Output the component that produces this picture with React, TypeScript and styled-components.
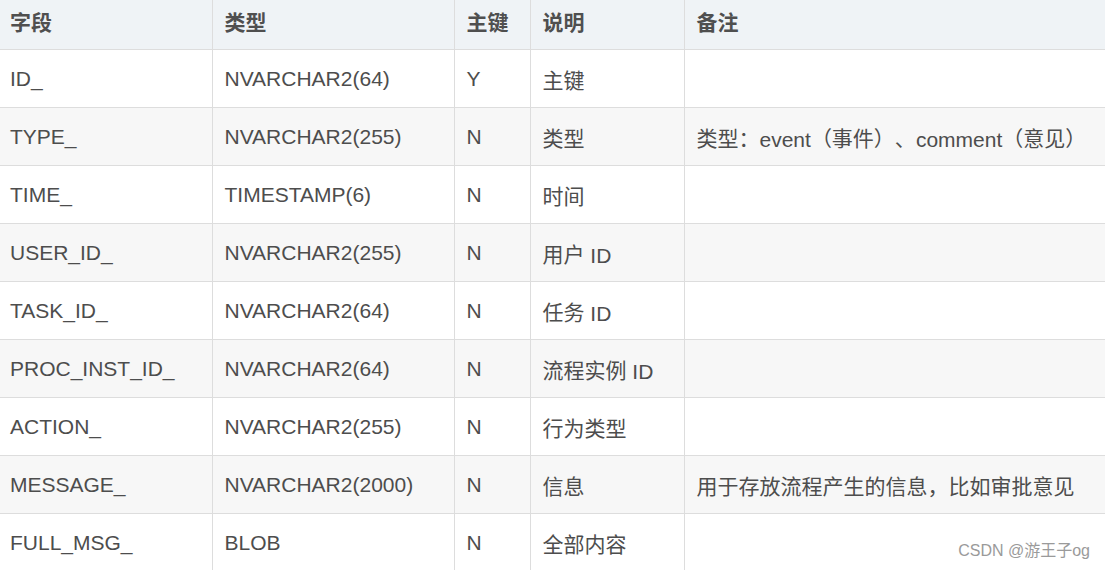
import React from "react";
import styled, { createGlobalStyle } from "styled-components";

const Global = createGlobalStyle`
  html, body { margin: 0; padding: 0; background: #fff; overflow: hidden; }
  body { font-family: "Liberation Sans", "Noto Sans CJK SC", sans-serif; }
`;

const Page = styled.div`
  position: relative;
  width: 1105px;
  height: 570px;
  overflow: hidden;
`;

const Table = styled.table`
  width: 1105px;
  margin-top: -8px;
  border-collapse: collapse;
  table-layout: fixed;
  font-size: 21px;
  color: #4d4d4d;
  text-spacing-trim: space-all;
`;

const Col = styled.col<{ $w?: number }>`
  width: ${(p) => (p.$w ? `${p.$w}px` : "auto")};
`;

const HeadCell = styled.th`
  height: 57px;
  padding: 0 12px;
  text-align: left;
  font-weight: bold;
  color: #4f4f4f;
  background: #eff3f6;
  border-right: 1px solid #dddddd;
  border-bottom: 1px solid #dddddd;
  white-space: nowrap;
  &:first-child { padding-left: 10px; }
  &:last-child { border-right: none; }
`;

const Row = styled.tr<{ $striped: boolean }>`
  background: ${(p) => (p.$striped ? "#f7f7f7" : "#ffffff")};
`;

const Cell = styled.td`
  height: 57px;
  padding: 0 12px;
  border-right: 1px solid #dddddd;
  border-bottom: 1px solid #dddddd;
  white-space: nowrap;
  &:first-child { padding-left: 10px; }
  &:last-child { border-right: none; }
`;

const Han = styled.span`
  vertical-align: 1px;
`;

const Watermark = styled.div`
  position: absolute;
  right: 15px;
  bottom: 9px;
  font-size: 16px;
  color: #9a9a9a;
  font-family: "Liberation Sans", "Noto Sans CJK SC", sans-serif;
`;

const HAN_RE = /([\u3000-\u303f\u4e00-\u9fff\uff00-\uffef]+)/;

function Text({ value }: { value: string }) {
  const parts = value.split(HAN_RE);
  return (
    <>
      {parts.map((p, i) =>
        p === "" ? null : i % 2 === 1 ? (
          <Han key={i}>{p}</Han>
        ) : (
          <React.Fragment key={i}>{p}</React.Fragment>
        )
      )}
    </>
  );
}

const widths = [212, 242, 76, 154, 0];
const headers = ["字段", "类型", "主键", "说明", "备注"];

const rows: [string, string, string, string, string][] = [
  ["ID_", "NVARCHAR2(64)", "Y", "主键", ""],
  ["TYPE_", "NVARCHAR2(255)", "N", "类型", "类型：event（事件）、comment（意见）"],
  ["TIME_", "TIMESTAMP(6)", "N", "时间", ""],
  ["USER_ID_", "NVARCHAR2(255)", "N", "用户 ID", ""],
  ["TASK_ID_", "NVARCHAR2(64)", "N", "任务 ID", ""],
  ["PROC_INST_ID_", "NVARCHAR2(64)", "N", "流程实例 ID", ""],
  ["ACTION_", "NVARCHAR2(255)", "N", "行为类型", ""],
  ["MESSAGE_", "NVARCHAR2(2000)", "N", "信息", "用于存放流程产生的信息，比如审批意见"],
  ["FULL_MSG_", "BLOB", "N", "全部内容", ""],
];

export default function App() {
  return (
    <Page>
      <Global />
      <Table>
        <colgroup>
          {widths.map((w, i) => (
            <Col key={i} $w={w} />
          ))}
        </colgroup>
        <thead>
          <tr>
            {headers.map((h) => (
              <HeadCell key={h}>
                <Text value={h} />
              </HeadCell>
            ))}
          </tr>
        </thead>
        <tbody>
          {rows.map((r, i) => (
            <Row key={r[0]} $striped={i % 2 === 1}>
              {r.map((c, j) => (
                <Cell key={j}>
                  <Text value={c} />
                </Cell>
              ))}
            </Row>
          ))}
        </tbody>
      </Table>
      <Watermark>CSDN @游王子og</Watermark>
    </Page>
  );
}
